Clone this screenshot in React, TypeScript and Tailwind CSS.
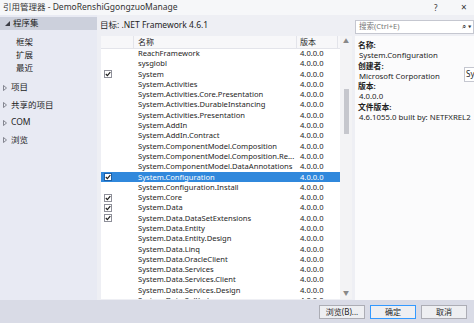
import React from "react";

// ─── Data ────────────────────────────────────────────────────────────────────

const assemblies: { name: string; checked?: boolean }[] = [
  { name: "ReachFramework" },
  { name: "sysglobl" },
  { name: "System", checked: true },
  { name: "System.Activities" },
  { name: "System.Activities.Core.Presentation" },
  { name: "System.Activities.DurableInstancing" },
  { name: "System.Activities.Presentation" },
  { name: "System.AddIn" },
  { name: "System.AddIn.Contract" },
  { name: "System.ComponentModel.Composition" },
  { name: "System.ComponentModel.Composition.Re..." },
  { name: "System.ComponentModel.DataAnnotations" },
  { name: "System.Configuration", checked: true },
  { name: "System.Configuration.Install" },
  { name: "System.Core", checked: true },
  { name: "System.Data", checked: true },
  { name: "System.Data.DataSetExtensions", checked: true },
  { name: "System.Data.Entity" },
  { name: "System.Data.Entity.Design" },
  { name: "System.Data.Linq" },
  { name: "System.Data.OracleClient" },
  { name: "System.Data.Services" },
  { name: "System.Data.Services.Client" },
  { name: "System.Data.Services.Design" },
  { name: "System.Data.SqlXml" },
];

const SELECTED = 12;

// ─── Bits ────────────────────────────────────────────────────────────────────

function Check({ on, selected }: { on?: boolean; selected?: boolean }) {
  if (!on) return null;
  return (
    <span
      className={
        "flex h-[8px] w-[8px] items-center justify-center border " +
        (selected ? "border-[#1b5fa8] bg-white" : "border-[#8e8f99] bg-white")
      }
    >
      <svg width="6" height="6" viewBox="0 0 6 6">
        <path d="M0.8 3 L2.4 4.6 L5.3 1.2" fill="none" stroke="#1e1e1e" strokeWidth="1.2" />
      </svg>
    </span>
  );
}

function NavGroup({ label }: { label: string }) {
  return (
    <div className="flex h-[17.5px] items-center gap-[4px] pl-[3px] text-[8.5px] text-[#1e1e1e]">
      <svg width="4" height="6" viewBox="0 0 4 6">
        <path d="M0.5 0.5 L3.5 3 L0.5 5.5 Z" fill="none" stroke="#6b6d77" strokeWidth="0.8" />
      </svg>
      <span>{label}</span>
    </div>
  );
}

// ─── App ─────────────────────────────────────────────────────────────────────

export default function App() {
  return (
    <div className="flex h-[323px] w-[474px] flex-col overflow-hidden bg-[#eeeff4] font-['Noto_Sans','Noto_Sans_CJK_SC',sans-serif] text-[#1e1e1e]">
      {/* Title bar */}
      <div className="flex h-[15px] items-center bg-[#f6f7f9] pl-[3px] text-[8.5px] text-[#333]">
        <span className="flex-1">引用管理器 - DemoRenshiGgongzuoManage</span>
        <span className="w-[27px] text-[8px]">?</span>
        <span className="w-[13px] text-[10px]">×</span>
      </div>

      <div className="flex flex-1">
        {/* Left nav */}
        <div className="flex w-[97px] flex-col bg-[#e8eaf3] pt-[2px]">
          <div className="flex h-[13px] items-center gap-[3px] bg-[#ccd0dc] pl-[5px] text-[8.5px]">
            <svg width="5" height="5" viewBox="0 0 5 5">
              <path d="M5 0 L5 5 L0 5 Z" fill="#3c3d45" />
            </svg>
            <span>程序集</span>
          </div>
          <div className="flex flex-col pl-[16px] pt-[5px] text-[8.5px]">
            <span className="h-[13px] leading-[13px]">框架</span>
            <span className="h-[13px] leading-[13px]">扩展</span>
            <span className="h-[13px] leading-[13px]">最近</span>
          </div>
          <div className="mt-[5px] flex flex-col">
            <NavGroup label="项目" />
            <NavGroup label="共享的项目" />
            <NavGroup label="COM" />
            <NavGroup label="浏览" />
          </div>
        </div>

        {/* Main */}
        <div className="flex flex-1 flex-col">
          <div className="flex h-[21px] items-center">
            <span className="flex-1 pl-[3px] text-[8.5px]">目标: .NET Framework 4.6.1</span>
            <div className="mt-[3px] flex h-[14px] w-[119px] items-center justify-between border border-[#c5c7d0] bg-white pl-[3px] pr-[2px] text-[7.5px] text-[#777]">
              <span>搜索(Ctrl+E)</span>
              <span className="text-[#333]">⌕ ▾</span>
            </div>
          </div>

          <div className="flex flex-1">
            {/* Assembly list */}
            <div className="ml-[4px] flex h-[263px] w-[251px] overflow-hidden bg-white">
              <div className="flex w-[239px] flex-col">
                <div className="flex h-[12.5px] shrink-0 items-center border-b border-[#e3e4ea] bg-[#f7f7f9] text-[8px]">
                  <span className="h-full w-[33px] border-r border-[#e3e4ea]" />
                  <span className="w-[163px] border-r border-[#e3e4ea] pl-[4px]">名称</span>
                  <span className="w-[41px] border-r border-[#e3e4ea] pl-[3px]">版本</span>
                </div>
                {assemblies.map((a, i) => {
                  const sel = i === SELECTED;
                  return (
                    <div
                      key={a.name}
                      className={
                        "flex h-[10.3px] shrink-0 items-center text-[7.6px] " +
                        (sel ? "bg-[#3088dc] text-white" : "text-[#1e1e1e]")
                      }
                    >
                      <span className="flex w-[33px] items-center pl-[3px]">
                        <Check on={a.checked} selected={sel} />
                      </span>
                      <span className="w-[163px] overflow-hidden whitespace-nowrap pl-[4px]">{a.name}</span>
                      <span className="w-[43px] pl-[3px]">4.0.0.0</span>
                    </div>
                  );
                })}
              </div>
              {/* Scrollbar */}
              <div className="relative flex w-[12px] flex-col items-center bg-[#f3f3f5]">
                <span className="mt-[1px] text-[6px] text-[#888]">▲</span>
                <div className="mt-[43px] h-[45px] w-[5px] bg-[#c6c7cd]" />
                <div className="flex-1" />
                <span className="mb-[1px] text-[6px] text-[#888]">▼</span>
              </div>
            </div>

            {/* Details */}
            <div className="relative ml-[3px] flex flex-1 flex-col bg-[#fbfbfc] pl-[3px] pt-[4px] text-[7.8px] leading-[10.3px]">
              <span className="font-bold">名称:</span>
              <span className="pl-[1px]">System.Configuration</span>
              <span className="font-bold">创建者:</span>
              <span className="pl-[1px]">Microsoft Corporation</span>
              <span className="font-bold">版本:</span>
              <span className="pl-[1px]">4.0.0.0</span>
              <span className="font-bold">文件版本:</span>
              <span className="pl-[1px]">4.6.1055.0 built by: NETFXREL2</span>
              <div className="absolute left-[109px] top-[31px] flex h-[15px] w-[14px] items-center border border-[#c5c7d0] bg-white pl-[1px] text-[8px]">
                Sy
              </div>
            </div>
          </div>
        </div>
      </div>

      {/* Footer */}
      <div className="flex h-[23px] items-center justify-end gap-[5px] bg-[#d9dbe6] pr-[7px] text-[8px]">
        <button className="h-[14px] w-[46px] border border-[#acadb5] bg-[#eeeff2]">浏览(B)...</button>
        <button className="h-[14px] w-[46px] border border-[#3399ff] bg-[#eeeff2]">确定</button>
        <button className="h-[14px] w-[46px] border border-[#acadb5] bg-[#eeeff2]">取消</button>
      </div>
    </div>
  );
}
